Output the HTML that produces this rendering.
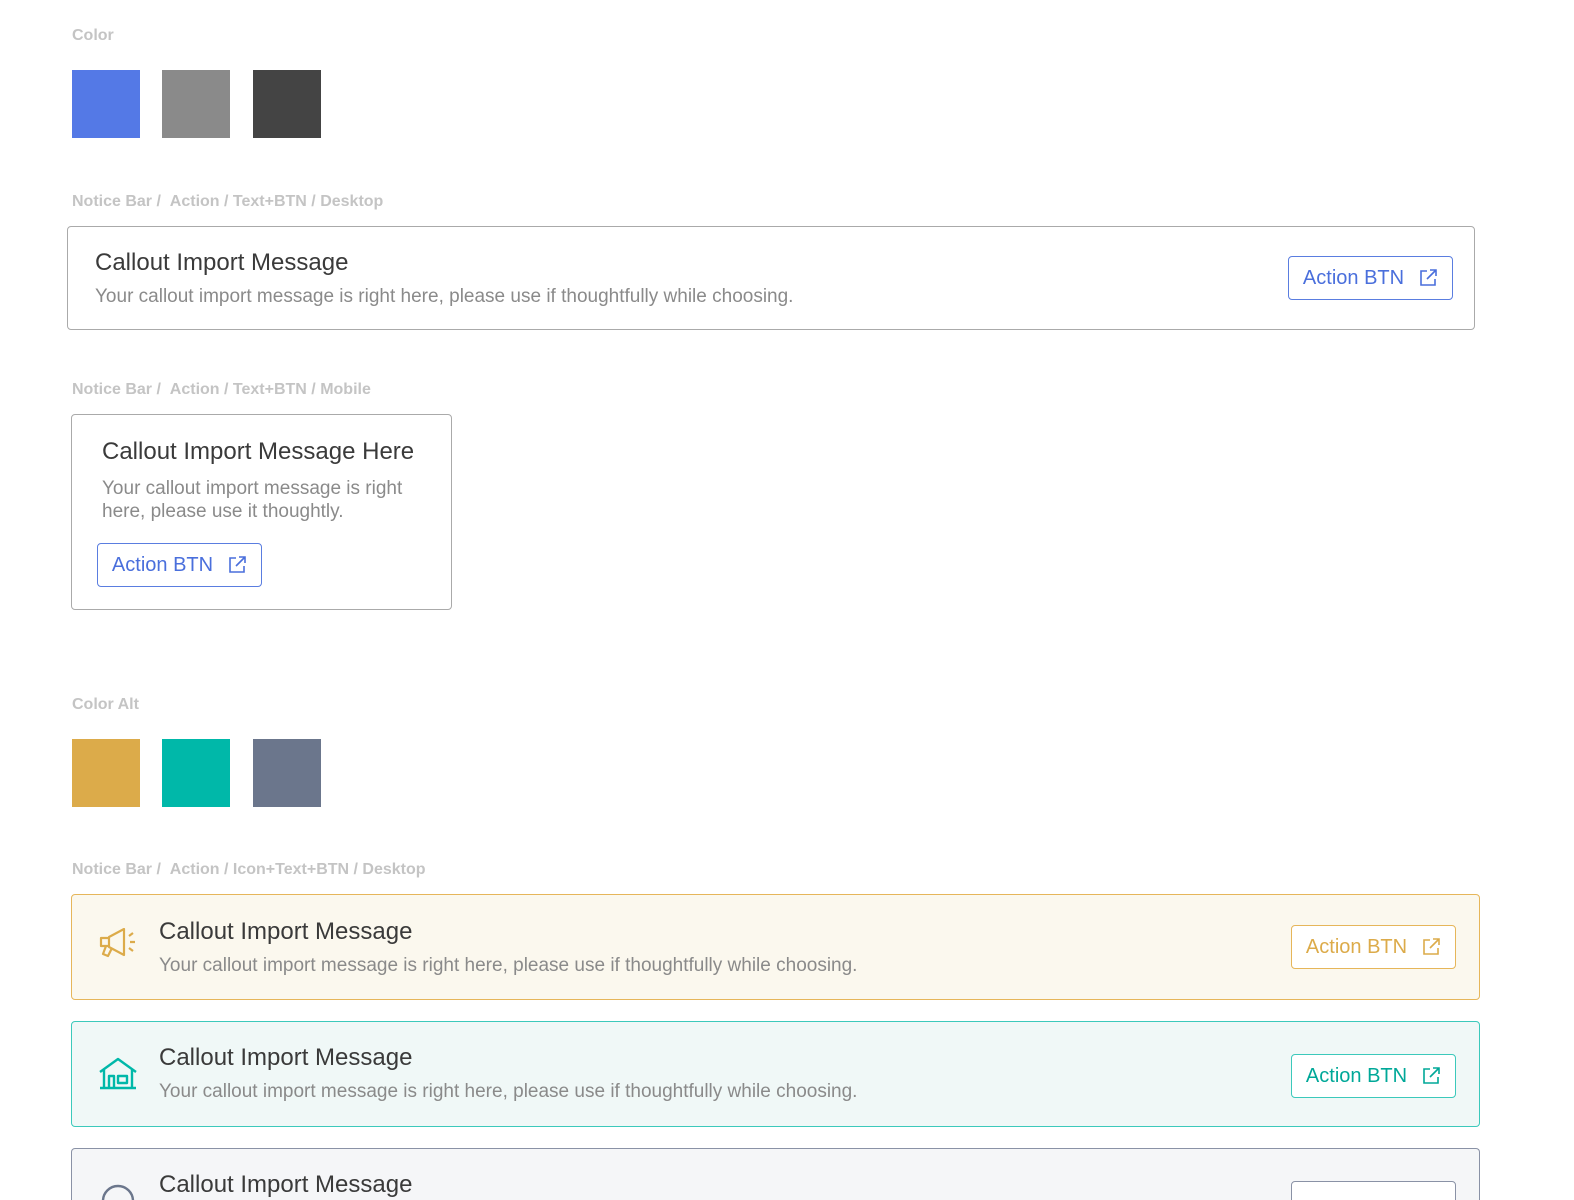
<!DOCTYPE html><html style="overflow:hidden;height:1200px"><head><style>
body{margin:0;background:#fff;font-family:"Liberation Sans",sans-serif;width:1574px;height:1200px;overflow:hidden;position:relative}
.a{position:absolute}
.lbl{font-size:16px;font-weight:bold;color:#c4c4c4;left:72px}
.sw{width:68px;height:68px;position:absolute}
.box{position:absolute;box-sizing:border-box;border-radius:4px}
.t{font-size:24px;color:#3a3a3a;position:absolute;white-space:nowrap}
.s{font-size:19px;color:#8a8a8a;position:absolute;white-space:nowrap}
.btn{position:absolute;box-sizing:border-box;border:1.5px solid;border-radius:4px;width:165px;height:44px;font-size:20px;display:flex;align-items:center;justify-content:center;gap:14px;background:#fff}
.btn svg{width:20px;height:20px}
</style></head><body>
<div class="a lbl" style="top:27px">Color</div>
<div class="sw" style="left:72px;top:70px;background:#5479e6"></div>
<div class="sw" style="left:162px;top:70px;background:#8a8a8a"></div>
<div class="sw" style="left:253px;top:70px;background:#444"></div>

<div class="a lbl" style="top:193px">Notice Bar / &nbsp;Action / Text+BTN / Desktop</div>
<div class="box" style="left:67px;top:226px;width:1408px;height:104px;border:1.5px solid #aaa">
<div class="t" style="left:27px;top:22px">Callout Import Message</div>
<div class="s" style="left:27px;top:59px">Your callout import message is right here, please use if thoughtfully while choosing.</div>
</div>
<div class="btn" style="left:1288px;top:256px;border-color:#5a7de0;color:#4a6fdc">Action BTN <svg viewBox="0 0 20 20" fill="none" stroke="currentColor" stroke-width="1.6"><path d="M9 3H3v14h14v-6M12 2h6v6M18 2l-9 9"/></svg></div>

<div class="a lbl" style="top:381px">Notice Bar / &nbsp;Action / Text+BTN / Mobile</div>
<div class="box" style="left:71px;top:414px;width:381px;height:196px;border:1.5px solid #aaa">
<div class="t" style="left:30px;top:23px">Callout Import Message Here</div>
<div class="s" style="left:30px;top:62px;line-height:23px">Your callout import message is right<br>here, please use it thoughtly.</div>
</div>
<div class="btn" style="left:97px;top:543px;border-color:#5a7de0;color:#4a6fdc">Action BTN <svg viewBox="0 0 20 20" fill="none" stroke="currentColor" stroke-width="1.6"><path d="M9 3H3v14h14v-6M12 2h6v6M18 2l-9 9"/></svg></div>

<div class="a lbl" style="top:696px">Color Alt</div>
<div class="sw" style="left:72px;top:739px;background:#dcab4a"></div>
<div class="sw" style="left:162px;top:739px;background:#00b8a9"></div>
<div class="sw" style="left:253px;top:739px;background:#6b768c"></div>

<div class="a lbl" style="top:861px">Notice Bar / &nbsp;Action / Icon+Text+BTN / Desktop</div>

<div class="box" style="left:71px;top:894px;width:1409px;height:106px;border:1.5px solid #e6b65a;background:#fbf8ee">
<svg class="a" style="left:26px;top:33px" width="42" height="36" viewBox="0 0 42 36" fill="none" stroke="#dcab4a" stroke-width="2.2" stroke-linejoin="round"><path d="M3 10h8v8H3zM11 9l15-8v26L11 19zM8 18l-3 8 5 2 4-8M31 8l4-3M32 14h5M31 20l4 3"/></svg>
<div class="t" style="left:87px;top:23px">Callout Import Message</div>
<div class="s" style="left:87px;top:60px">Your callout import message is right here, please use if thoughtfully while choosing.</div>
</div>
<div class="btn" style="left:1291px;top:925px;border-color:#e6b65a;color:#dcab4a">Action BTN <svg viewBox="0 0 20 20" fill="none" stroke="currentColor" stroke-width="1.6"><path d="M9 3H3v14h14v-6M12 2h6v6M18 2l-9 9"/></svg></div>

<div class="box" style="left:71px;top:1021px;width:1409px;height:106px;border:1.5px solid #3cc9bb;background:#f0f8f7">
<svg class="a" style="left:26px;top:34px" width="40" height="34" viewBox="0 0 40 34" fill="none" stroke="#00b8a9" stroke-width="2.4" stroke-linejoin="round"><path d="M2 16L20 3l18 13M6 13v18M34 13v18M2 32h36M11 32V20h5v12M20 20h9v7h-9z"/></svg>
<div class="t" style="left:87px;top:22px">Callout Import Message</div>
<div class="s" style="left:87px;top:59px">Your callout import message is right here, please use if thoughtfully while choosing.</div>
</div>
<div class="btn" style="left:1291px;top:1054px;border-color:#3cc9bb;color:#00a898">Action BTN <svg viewBox="0 0 20 20" fill="none" stroke="currentColor" stroke-width="1.6"><path d="M9 3H3v14h14v-6M12 2h6v6M18 2l-9 9"/></svg></div>

<div class="box" style="left:71px;top:1148px;width:1409px;height:52px;border:1.5px solid #8a92a6;border-bottom:none;border-radius:4px 4px 0 0;background:#f5f6f8;overflow:hidden">
<svg class="a" style="left:28px;top:34px" width="36" height="36" viewBox="0 0 36 36" fill="none" stroke="#6b768c" stroke-width="2.4"><circle cx="18" cy="18" r="15"/></svg>
<div class="t" style="left:87px;top:22px">Callout Import Message</div>
</div>
<div class="btn" style="left:1291px;top:1181px;border-color:#8a92a6;color:#6b768c"></div>
</body></html>
